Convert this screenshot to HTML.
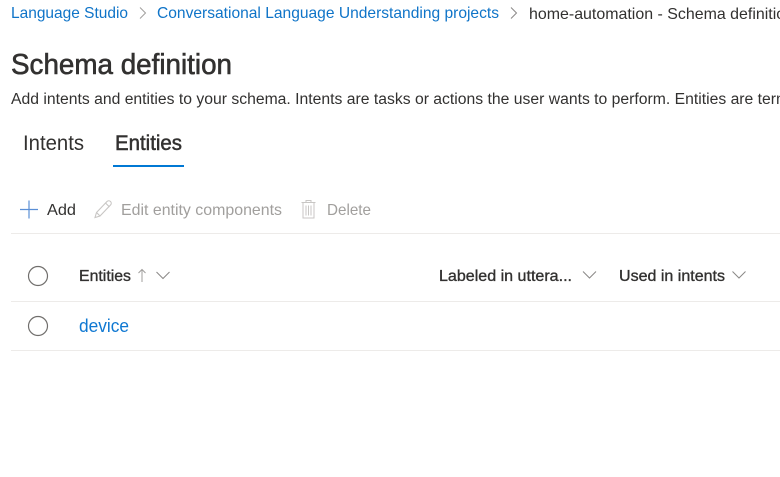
<!DOCTYPE html>
<html><head><meta charset="utf-8"><style>
html,body{margin:0;padding:0;background:#fff;width:780px;height:477px;overflow:hidden}
svg{display:block}
text{font-family:"Liberation Sans",sans-serif;fill:#323130;white-space:pre}
.l{fill:#0f74c8}
.g{fill:#a19f9d}
.s{stroke:#323130;stroke-width:.35px}
</style></head><body>
<svg width="780" height="477" viewBox="0 0 780 477" xmlns="http://www.w3.org/2000/svg">
<text class="l" x="11" y="18" font-size="16" textLength="117" lengthAdjust="spacingAndGlyphs">Language Studio</text>
<path d="M140 7.500l5.500 5.500-5.500 5.500" fill="none" stroke="#a19f9d" stroke-width="1"/>
<text class="l" x="157" y="18" font-size="16" textLength="342" lengthAdjust="spacingAndGlyphs">Conversational Language Understanding projects</text>
<path d="M511 7.500l5.500 5.500-5.500 5.500" fill="none" stroke="#8a8886" stroke-width="1"/>
<text x="529" y="19" font-size="16" textLength="265" lengthAdjust="spacingAndGlyphs">home-automation - Schema definition</text>

<text class="s" style="stroke-width:.6px" x="11" y="74" font-size="29" textLength="221" lengthAdjust="spacingAndGlyphs">Schema definition</text>
<text x="11" y="104" font-size="15.500" textLength="786" lengthAdjust="spacingAndGlyphs">Add intents and entities to your schema. Intents are tasks or actions the user wants to perform. Entities are terms</text>

<text x="23" y="150" font-size="21" textLength="61" lengthAdjust="spacingAndGlyphs">Intents</text>
<text class="s" style="stroke-width:.5px" x="115" y="150" font-size="21" textLength="67" lengthAdjust="spacingAndGlyphs">Entities</text>
<rect x="113" y="165" width="71" height="2" fill="#0078d4"/>

<path d="M20 209.500h18M29 200.500v18" stroke="#5b8fd6" stroke-width="1.200" fill="none"/>
<text x="47" y="215" font-size="16" textLength="29" lengthAdjust="spacingAndGlyphs">Add</text>
<path d="M95 217.500l1.500-5 10.500-11c1-1 2.500-1 3.500 0s1 2.500 0 3.500l-10.500 11zM105.500 203l4 4M96.500 212.500l3.500 3.500" fill="none" stroke="#c8c6c4" stroke-width="1.100"/>
<text class="g" x="121" y="215" font-size="16" textLength="161" lengthAdjust="spacingAndGlyphs">Edit entity components</text>
<path d="M301.500 202.500h14M306 202.500v-2h5v2M303 202.500v15.500h11v-15.500M306 205.500v10M308.500 205.500v10M311 205.500v10" fill="none" stroke="#c8c6c4" stroke-width="1"/>
<text class="g" x="327" y="215" font-size="16" textLength="44" lengthAdjust="spacingAndGlyphs">Delete</text>
<rect x="11" y="233" width="769" height="1" fill="#edebe9"/>

<circle cx="38" cy="276" r="9.500" fill="none" stroke="#706e6c" stroke-width="1.200"/>
<text class="s" x="79" y="281" font-size="15.500" textLength="52" lengthAdjust="spacingAndGlyphs">Entities</text>
<path d="M142 282v-12.500M138.500 273l3.500-3.500 3.500 3.500" fill="none" stroke="#a19f9d" stroke-width="1"/>
<path d="M156.500 272l6.500 6.500 6.500-6.500" fill="none" stroke="#8a8886" stroke-width="1"/>
<text class="s" x="439" y="281" font-size="15.500" textLength="133" lengthAdjust="spacingAndGlyphs">Labeled in uttera...</text>
<path d="M583 271.500l6.500 6.500 6.500-6.500" fill="none" stroke="#8a8886" stroke-width="1"/>
<text class="s" x="619" y="281" font-size="15.500" textLength="106" lengthAdjust="spacingAndGlyphs">Used in intents</text>
<path d="M732.500 271.500l6.500 6.500 6.500-6.500" fill="none" stroke="#8a8886" stroke-width="1"/>
<rect x="11" y="301" width="769" height="1" fill="#edebe9"/>

<circle cx="38" cy="326" r="9.500" fill="none" stroke="#706e6c" stroke-width="1.200"/>
<text x="79" y="332" font-size="18" style="fill:#0f78d2" textLength="50" lengthAdjust="spacingAndGlyphs">device</text>
<rect x="11" y="350" width="769" height="1" fill="#edebe9"/>
</svg>
</body></html>
